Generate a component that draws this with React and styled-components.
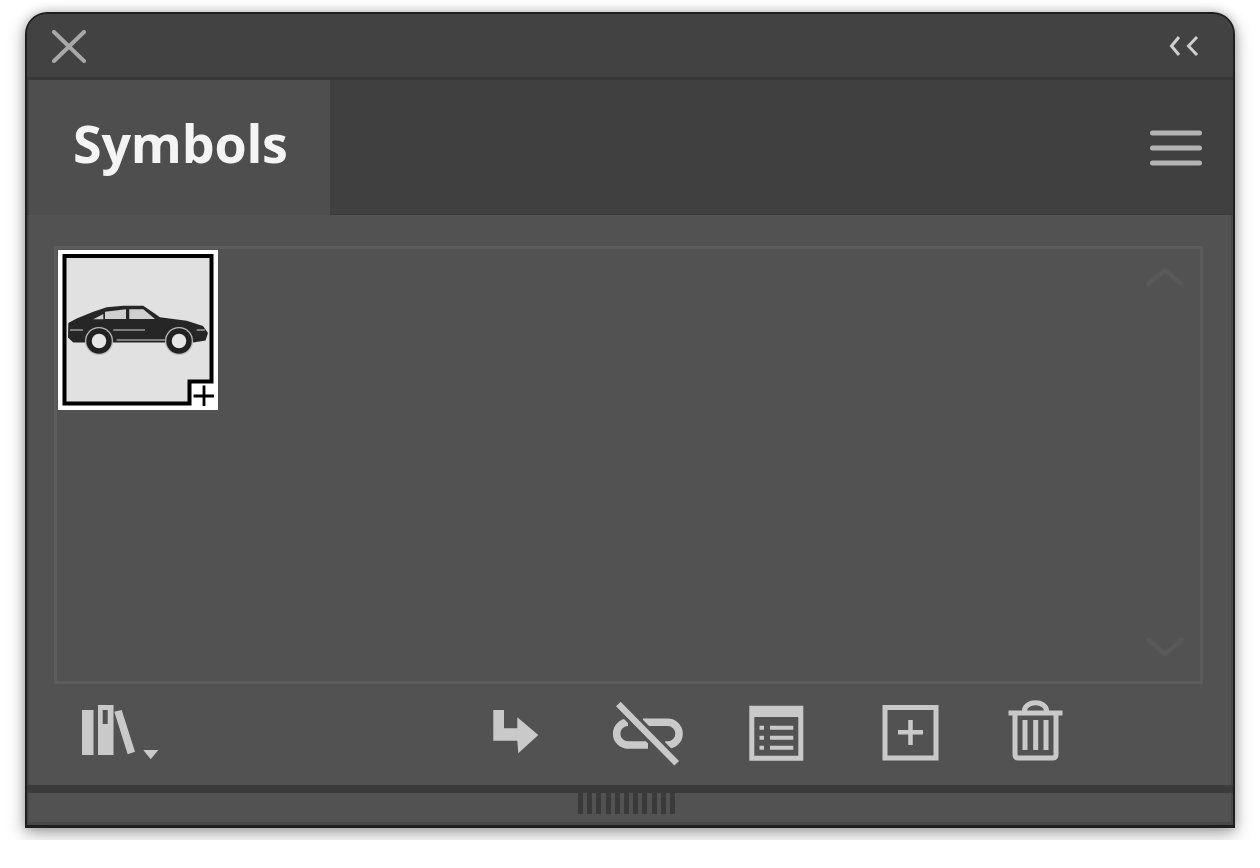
import styled, { createGlobalStyle } from "styled-components";

const GlobalStyle = createGlobalStyle`
  html, body {
    margin: 0;
    background: #fff;
  }
  #root {
    padding: 12px 25px;
    font-family: "Open Sans", "Liberation Sans", sans-serif;
  }
`;

const Panel = styled.div`
  box-sizing: border-box;
  width: 1210px;
  height: 816px;
  display: flex;
  flex-direction: column;
  border: 2px solid #1f1f1f;
  border-bottom-width: 3px;
  border-radius: 22px 22px 0 0;
  overflow: hidden;
  background: #474747;
`;

const PanelFrame = styled.div`
  width: 1210px;
  border-radius: 22px 22px 0 0;
  box-shadow: 0 6px 18px rgba(0, 0, 0, 0.32), 0 0 10px rgba(0, 0, 0, 0.22);
`;

const TitleBar = styled.div`
  box-sizing: border-box;
  flex: none;
  height: 66px;
  display: flex;
  align-items: center;
  justify-content: space-between;
  padding: 0 34px 0 25px;
  background: #424242;
  border-bottom: 3px solid #383838;
`;

const TabStrip = styled.div`
  flex: none;
  height: 135px;
  display: flex;
  justify-content: space-between;
  align-items: center;
  padding: 0 31px 0 2px;
  background: #404040;
  border-bottom: 1px solid #383838;
  box-sizing: border-box;
`;

const Tab = styled.div`
  box-sizing: border-box;
  align-self: stretch;
  width: 301px;
  margin-bottom: -1px;
  padding: 29px 0 0 44px;
  background: #4e4e4e;
  color: #f4f4f4;
  font-size: 52px;
  font-weight: 700;
  line-height: 68px;
  letter-spacing: -0.2px;
  filter: blur(0.5px);
`;

const Main = styled.div`
  flex: 1;
  display: flex;
  flex-direction: column;
  min-height: 0;
  margin: 0 2px;
  padding: 31px 28px 0 25px;
  background: #525252;
`;

const List = styled.div`
  box-sizing: border-box;
  flex: none;
  height: 438px;
  display: flex;
  border: 3px solid #5c5c5c;
`;

const Grid = styled.div`
  flex: 1;
  padding: 1px;
`;

const Tile = styled.button`
  display: block;
  width: 160px;
  height: 160px;
  padding: 0;
  border: 0;
  background: #fff;
`;

const ScrollColumn = styled.div`
  width: 70px;
  display: flex;
  flex-direction: column;
  justify-content: space-between;
  align-items: center;
  padding: 18px 0 24px;
  box-sizing: border-box;
  filter: blur(0.8px);
`;

const Toolbar = styled.div`
  flex: 1;
  display: flex;
  align-items: center;
  padding: 0 0 6px 27px;
`;

const ToolIcon = styled.svg`
  display: block;
  flex: none;
  margin-left: ${(p) => p.$gap}px;
  color: #c9c9c9;
  filter: blur(0.6px);
`;

const Separator = styled.div`
  flex: none;
  height: 8px;
  background: #3b3b3b;
`;

const Footer = styled.div`
  flex: none;
  box-sizing: border-box;
  height: 32px;
  display: flex;
  justify-content: center;
  margin: 0 2px;
  padding-right: 8px;
  background: #525252;
  border-bottom: 3px solid #474747;
`;

const Grip = styled.div`
  width: 97px;
  height: 21px;
  background: repeating-linear-gradient(
    90deg,
    #3a3a3a 0,
    #3a3a3a 5px,
    transparent 5px,
    transparent 9.2px
  );
  filter: blur(0.6px);
`;

const PlainIcon = styled.svg`
  display: block;
  margin-top: ${(p) => p.$top || 0}px;
  filter: blur(0.5px);
`;

const CarSwatch = () => (
  <svg width="160" height="160" viewBox="0 0 160 160">
    <path
      d="M6.5 6H153.5V131.5H131.5V153.5H6.5Z"
      fill="#e1e1e1"
      stroke="#000"
      strokeWidth="4"
    />
    <path
      d="M10.3 73 18.7 68.5 35.3 61.7 48.7 57.3 65.3 55.7H85.3L102 67.3 128.7 70.7 145 76 150 83 147.5 90.5 135.3 92.5H15.3L10 87.5Z"
      fill="#262626"
    />
    <path
      d="M47 61.7 68 59.3V69H47ZM71.3 59.3H85.3L97 69H71.3ZM35.3 69.3 45.3 64V69.3Z"
      fill="#cfcfcf"
    />
    <path
      d="M12 80H25M55.3 80H87M58.7 90H107M138.7 80H147"
      stroke="#9c9c9c"
      strokeWidth="1.6"
      fill="none"
    />
    <circle cx="41" cy="91" r="14" fill="#b9b9b9" />
    <circle cx="121" cy="91" r="14" fill="#b9b9b9" />
    <circle cx="41" cy="91" r="10" fill="#e6e6e6" stroke="#222" strokeWidth="5.5" />
    <circle cx="121" cy="91" r="10" fill="#e6e6e6" stroke="#222" strokeWidth="5.5" />
    <path d="M135.5 146H156M146 135.5V156" stroke="#000" strokeWidth="2.8" />
  </svg>
);

export default function App() {
  return (
    <>
      <GlobalStyle />
      <PanelFrame>
        <Panel>
          <TitleBar>
            <PlainIcon $top={2} width="34" height="33" viewBox="0 0 34 33">
              <path
                d="M2 2 32 31M32 2 2 31"
                stroke="#a8a8a8"
                strokeWidth="4"
                strokeLinecap="round"
              />
            </PlainIcon>
            <PlainIcon width="30" height="22" viewBox="0 0 30 22">
              <path
                d="M10 2 2.5 11 10 20M28 2 19.5 11 28 20"
                stroke="#cfcfcf"
                strokeWidth="3"
                fill="none"
              />
            </PlainIcon>
          </TitleBar>

          <TabStrip>
            <Tab>Symbols</Tab>
            <PlainIcon $top={1} width="52" height="36" viewBox="0 0 52 36">
              <path
                d="M2.5 3H49.5M2.5 18H49.5M2.5 33H49.5"
                stroke="#b4b4b4"
                strokeWidth="5"
                strokeLinecap="round"
              />
            </PlainIcon>
          </TabStrip>

          <Main>
            <List>
              <Grid>
                <Tile aria-label="Car symbol">
                  <CarSwatch />
                </Tile>
              </Grid>
              <ScrollColumn>
                <svg width="40" height="20" viewBox="0 0 40 20">
                  <path d="M2 18 20 3 38 18" stroke="#5c5c5c" strokeWidth="4" fill="none" />
                </svg>
                <svg width="40" height="20" viewBox="0 0 40 20">
                  <path d="M2 2 20 17 38 2" stroke="#5c5c5c" strokeWidth="4" fill="none" />
                </svg>
              </ScrollColumn>
            </List>

            <Toolbar>
              {/* libraries menu */}
              <ToolIcon $gap={0} width="78" height="72" viewBox="81 696 78 72">
                <path
                  fill="currentColor"
                  fillRule="evenodd"
                  d="M82 710H93.5V755H82ZM98 705H113.5V755H98ZM102.7 710V724H107.7V710ZM114.3 711.7 121.7 710 135 751.7 127.7 754.3ZM143.3 750H158.3L150.7 759.3Z"
                />
              </ToolIcon>
              {/* place symbol instance */}
              <ToolIcon $gap={334} width="46" height="72" viewBox="493 696 46 72">
                <path
                  fill="currentColor"
                  d="M493.3 710H504V728.3H517.3V717.3L538.3 735 518.3 753.3 517.3 740.7H493.3Z"
                />
              </ToolIcon>
              {/* break link */}
              <ToolIcon $gap={73} width="72" height="72" viewBox="612 696 72 72">
                <path
                  d="M628 722.3A11.3 11.3 0 0 0 628 745H648M643 722.3H667.7A11.3 11.3 0 0 1 667.7 745H665"
                  fill="none"
                  stroke="currentColor"
                  strokeWidth="7.5"
                />
                <path d="M618.3 704 676.7 763.3" stroke="#525252" strokeWidth="13" />
                <path d="M618.3 704 676.7 763.3" stroke="currentColor" strokeWidth="6.5" />
              </ToolIcon>
              {/* symbol options */}
              <ToolIcon $gap={64} width="56" height="72" viewBox="748 696 56 72">
                <path
                  fill="currentColor"
                  fillRule="evenodd"
                  d="M749.3 705.7H803.3V760.7H749.3ZM754.3 717V755.7H798.3V717Z"
                />
                <path
                  d="M759.5 727.7H764M759.5 737.7H764M759.5 747.7H764M770 727.7H793.3M770 737.7H793.3M770 747.7H793.3"
                  stroke="currentColor"
                  strokeWidth="4"
                />
              </ToolIcon>
              {/* new symbol */}
              <ToolIcon $gap={78} width="57" height="72" viewBox="882 696 57 72">
                <rect
                  x="885"
                  y="707.5"
                  width="51"
                  height="50.5"
                  fill="none"
                  stroke="currentColor"
                  strokeWidth="5"
                />
                <path d="M898 732.3H923M910.5 720V745" stroke="currentColor" strokeWidth="4.5" />
              </ToolIcon>
              {/* delete */}
              <ToolIcon $gap={69} width="56" height="72" viewBox="1008 696 56 72">
                <path
                  d="M1008.5 713H1062.5M1024.5 711C1024.5 700 1046.5 700 1046.5 711M1015 714V754.5Q1015 758 1018.5 758H1052.5Q1056 758 1056 754.5V714M1025 720V750M1035.7 720V750M1046 720V750"
                  fill="none"
                  stroke="currentColor"
                  strokeWidth="5"
                />
              </ToolIcon>
            </Toolbar>
          </Main>

          <Separator />
          <Footer>
            <Grip />
          </Footer>
        </Panel>
      </PanelFrame>
    </>
  );
}
